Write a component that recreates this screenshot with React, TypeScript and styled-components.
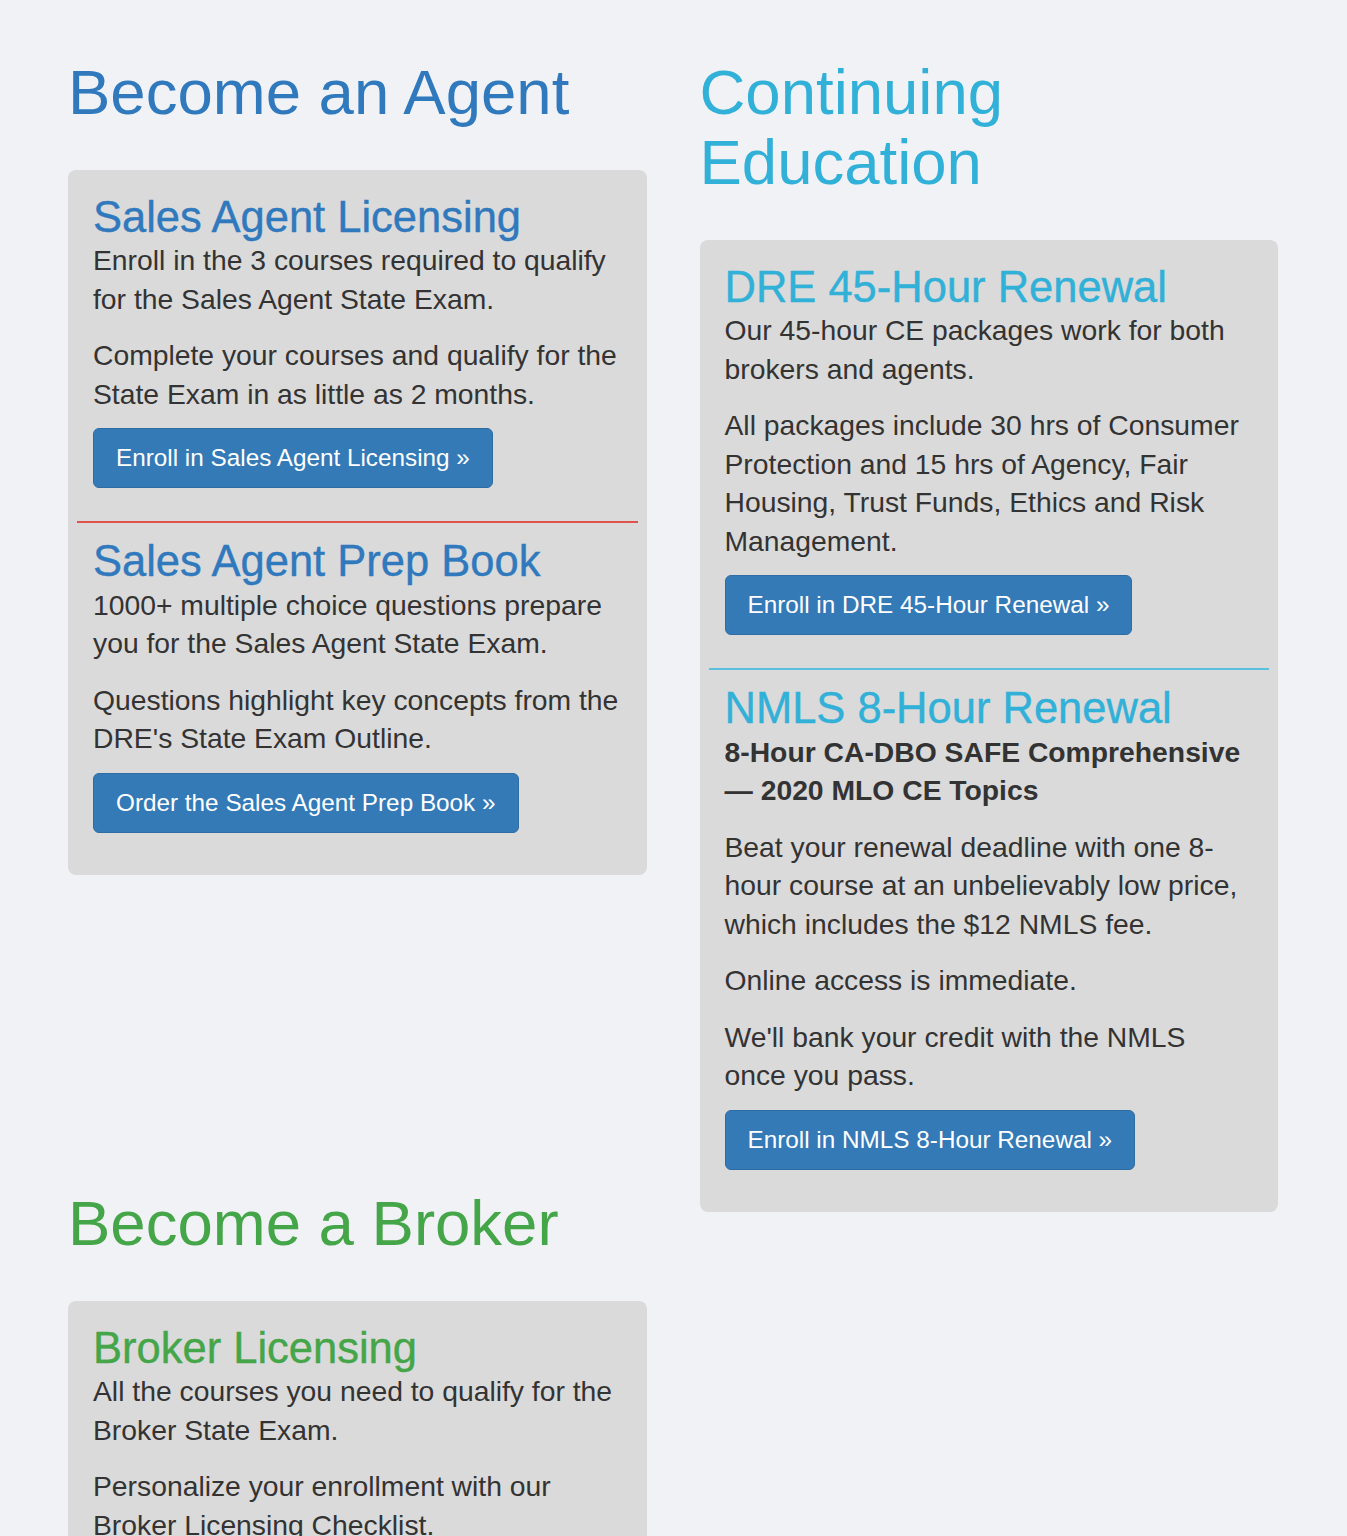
import React from "react";
import styled, { createGlobalStyle } from "styled-components";

const GlobalStyle = createGlobalStyle`
  html, body {
    margin: 0;
    padding: 0;
    background: #f1f2f6;
  }
  body {
    font-family: "Liberation Sans", Arial, Helvetica, sans-serif;
    color: #333;
  }
`;

const tones = {
  primary: "#3079bd",
  info: "#31b0d8",
  success: "#45a549",
};

const dividers = {
  primary: "#e0534d",
  info: "#5bc0de",
  success: "#e0534d",
};

type Tone = keyof typeof tones;

const Page = styled.div`
  display: grid;
  grid-template-columns: 1fr 1fr;
  column-gap: 53px;
  padding: 58px 69px 0 68px;
  align-items: start;
`;

const Column = styled.div`
  display: flex;
  flex-direction: column;
`;

const Section = styled.section<{ $offset?: number }>`
  margin-top: ${(p) => p.$offset ?? 0}px;
`;

const Heading = styled.h1<{ $tone: Tone }>`
  margin: 0 0 42px;
  font-size: 63.5px;
  font-weight: 400;
  line-height: 1.1;
  color: ${(p) => tones[p.$tone]};
`;

const Card = styled.div`
  background: #dadada;
  border-radius: 8px;
  padding: 9px;
`;

const Item = styled.div<{ $tone: Tone; $divided: boolean }>`
  padding: 15px 17px 16px 16px;
  border-top: ${(p) =>
    p.$divided ? `2px solid ${dividers[p.$tone]}` : "none"};
`;

const Title = styled.h2<{ $tone: Tone }>`
  margin: 0;
  font-size: 43.5px;
  font-weight: 400;
  line-height: 47.5px;
  color: ${(p) => tones[p.$tone]};
  -webkit-text-stroke: 0.4px ${(p) => tones[p.$tone]};
`;

const Text = styled.p<{ $bold?: boolean }>`
  margin: 0 0 18px;
  font-size: 28.3px;
  line-height: 38.5px;
  font-weight: ${(p) => (p.$bold ? 700 : 400)};
`;

const Button = styled.a`
  display: inline-block;
  margin: -3px 0 17px;
  padding: 12px 22px;
  font-size: 24.3px;
  line-height: 34px;
  color: #fff;
  background: #337ab7;
  border: 1px solid #2e6da4;
  border-radius: 6px;
  text-decoration: none;
  cursor: pointer;
`;

type Block = {
  title: string;
  lead?: string;
  paragraphs: string[];
  action?: string;
};

const agent: Block[] = [
  {
    title: "Sales Agent Licensing",
    paragraphs: [
      "Enroll in the 3 courses required to qualify for the Sales Agent State Exam.",
      "Complete your courses and qualify for the State Exam in as little as 2 months.",
    ],
    action: "Enroll in Sales Agent Licensing »",
  },
  {
    title: "Sales Agent Prep Book",
    paragraphs: [
      "1000+ multiple choice questions prepare you for the Sales Agent State Exam.",
      "Questions highlight key concepts from the DRE's State Exam Outline.",
    ],
    action: "Order the Sales Agent Prep Book »",
  },
];

const education: Block[] = [
  {
    title: "DRE 45-Hour Renewal",
    paragraphs: [
      "Our 45-hour CE packages work for both brokers and agents.",
      "All packages include 30 hrs of Consumer Protection and 15 hrs of Agency, Fair Housing, Trust Funds, Ethics and Risk Management.",
    ],
    action: "Enroll in DRE 45-Hour Renewal »",
  },
  {
    title: "NMLS 8-Hour Renewal",
    lead: "8-Hour CA-DBO SAFE Comprehensive — 2020 MLO CE Topics",
    paragraphs: [
      "Beat your renewal deadline with one 8-hour course at an unbelievably low price, which includes the $12 NMLS fee.",
      "Online access is immediate.",
      "We'll bank your credit with the NMLS once you pass.",
    ],
    action: "Enroll in NMLS 8-Hour Renewal »",
  },
];

const broker: Block[] = [
  {
    title: "Broker Licensing",
    paragraphs: [
      "All the courses you need to qualify for the Broker State Exam.",
      "Personalize your enrollment with our Broker Licensing Checklist.",
    ],
    action: "Enroll in Broker Licensing »",
  },
];

function Group({
  heading,
  tone,
  blocks,
  offset,
}: {
  heading: string;
  tone: Tone;
  blocks: Block[];
  offset?: number;
}) {
  return (
    <Section $offset={offset}>
      <Heading $tone={tone}>{heading}</Heading>
      <Card>
        {blocks.map((b, i) => (
          <Item key={b.title} $tone={tone} $divided={i > 0}>
            <Title $tone={tone}>{b.title}</Title>
            {b.lead && <Text $bold>{b.lead}</Text>}
            {b.paragraphs.map((p) => (
              <Text key={p}>{p}</Text>
            ))}
            {b.action && <Button>{b.action}</Button>}
          </Item>
        ))}
      </Card>
    </Section>
  );
}

export default function App() {
  return (
    <>
      <GlobalStyle />
      <Page>
        <Column>
          <Group heading="Become an Agent" tone="primary" blocks={agent} />
          <Group
            heading="Become a Broker"
            tone="success"
            blocks={broker}
            offset={314}
          />
        </Column>
        <Column>
          <Group
            heading="Continuing Education"
            tone="info"
            blocks={education}
          />
        </Column>
      </Page>
    </>
  );
}
